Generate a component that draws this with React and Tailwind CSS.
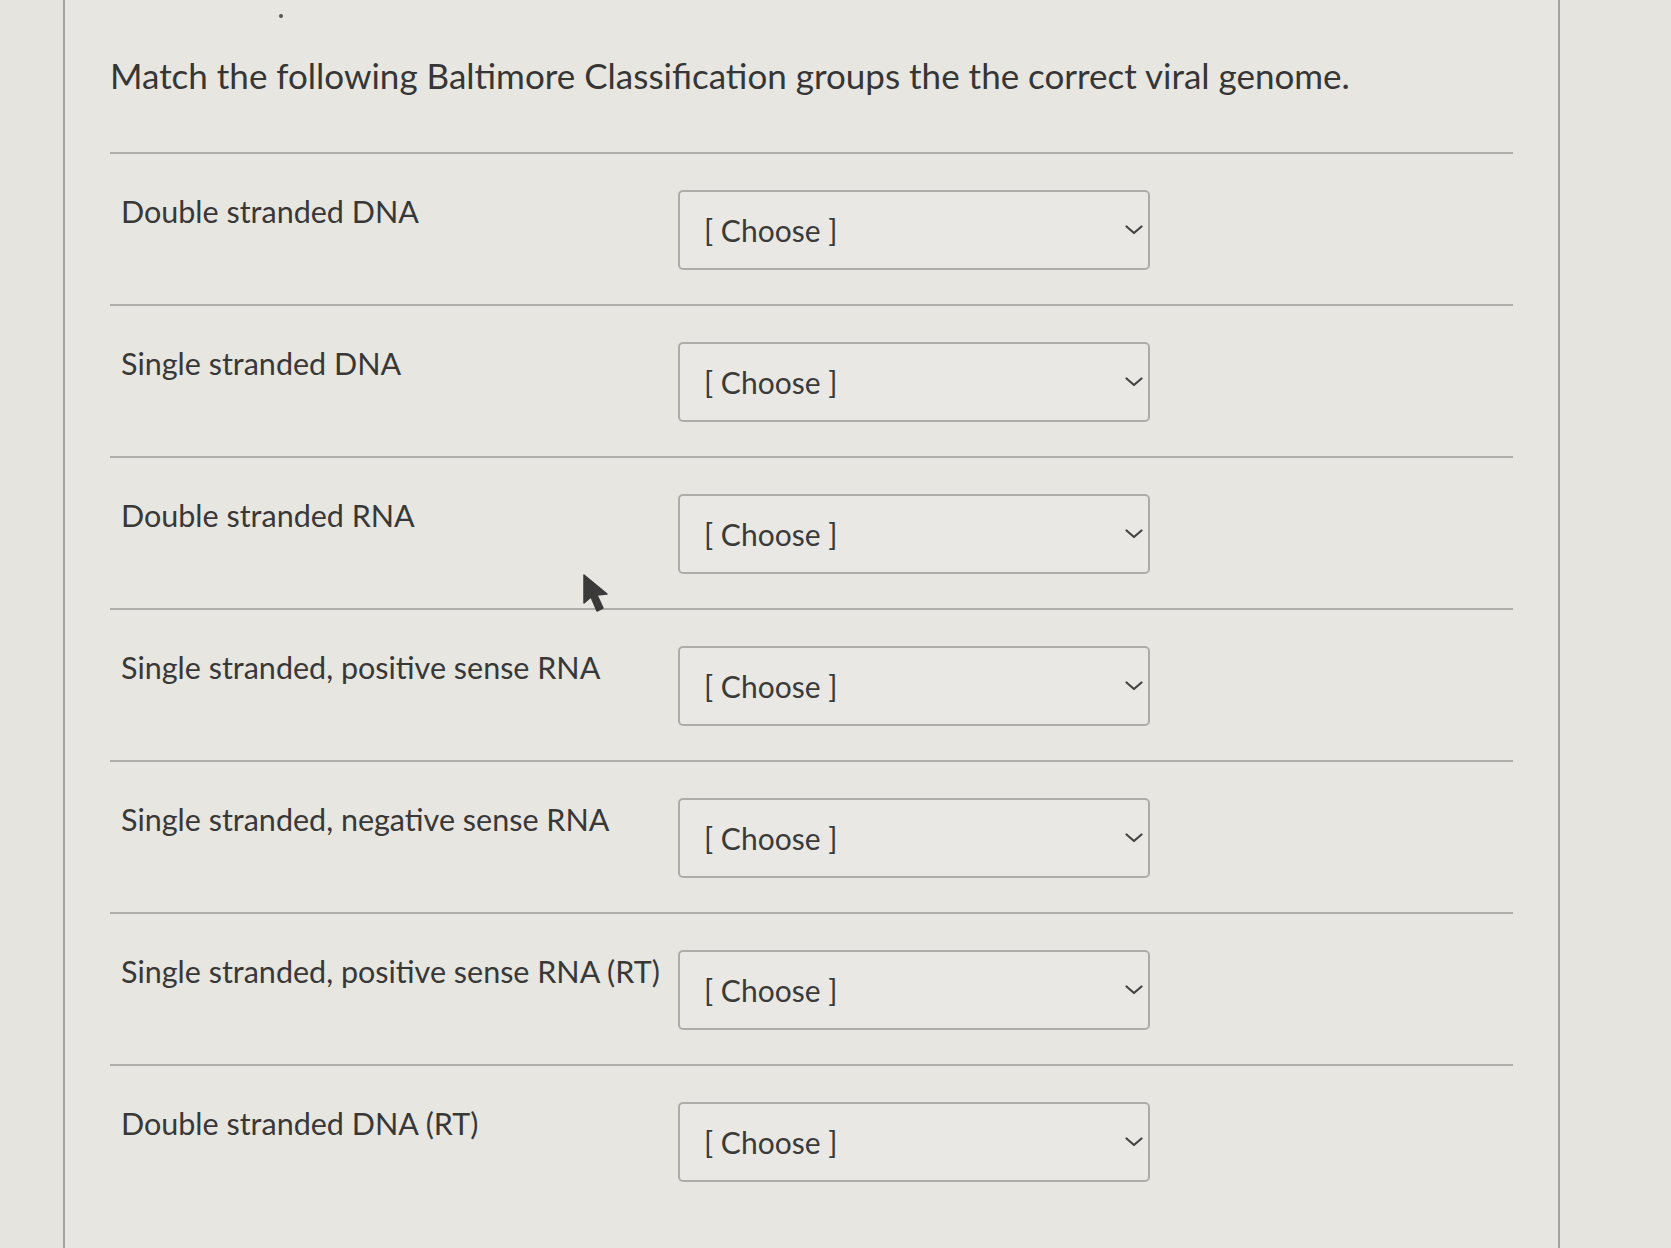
import React from "react";

const rows = [
  "Double stranded DNA",
  "Single stranded DNA",
  "Double stranded RNA",
  "Single stranded, positive sense RNA",
  "Single stranded, negative sense RNA",
  "Single stranded, positive sense RNA (RT)",
  "Double stranded DNA (RT)",
];

function Chevron() {
  return (
    <svg width="18" height="10" viewBox="0 0 18 10" fill="none" className="shrink-0">
      <path d="M1.5 1.5 L9 8 L16.5 1.5" stroke="#444444" strokeWidth="2.2" strokeLinecap="round" strokeLinejoin="round" />
    </svg>
  );
}

function Select() {
  return (
    <div className="mt-[36px] flex h-[80px] w-[472px] shrink-0 items-center justify-between rounded-[5px] border-2 border-[#adaca8] bg-[#e9e8e4] pl-[24px] pr-[5px]">
      <span className="text-[30px] leading-none text-[#3a3a3a]">[ Choose ]</span>
      <Chevron />
    </div>
  );
}

export default function App() {
  return (
    <div
      className="relative min-h-screen w-full overflow-hidden bg-[#e5e4df] text-[#3a3a3a]"
      style={{ fontFamily: "Lato, 'Open Sans', 'Liberation Sans', sans-serif" }}
    >
      <div className="ml-[63px] min-h-[1248px] w-[1497px] border-x-2 border-[#a3a3a1] bg-[#e7e6e1] pl-[45px] pr-[45px] pt-[54px]">
        <h1 className="text-[35px] font-normal leading-[42px] text-[#363636]">
          Match the following Baltimore Classification groups the the correct viral genome.
        </h1>
        <div className="mt-[56px] flex flex-col">
          {rows.map((label) => (
            <div key={label} className="flex h-[152px] border-t-2 border-[#afaeaa]">
              <div className="w-[568px] shrink-0 pl-[11px] pt-[39px] text-[30.5px] leading-[36px] text-[#383838]">
                {label}
              </div>
              <Select />
            </div>
          ))}
        </div>
      </div>

      {/* stray dot at top */}
      <div className="absolute left-[279px] top-[14px] h-[4px] w-[4px] rounded-full bg-[#555]" />

      {/* mouse cursor */}
      <svg className="absolute left-[582px] top-[573px]" width="28" height="42" viewBox="0 0 28 42">
        <path d="M2 2 L2 30 L9 24 L15 38 L21 35 L15 22 L25 21 Z" fill="#3a3a3a" stroke="#3a3a3a" strokeWidth="1.5" strokeLinejoin="round" />
      </svg>
    </div>
  );
}
